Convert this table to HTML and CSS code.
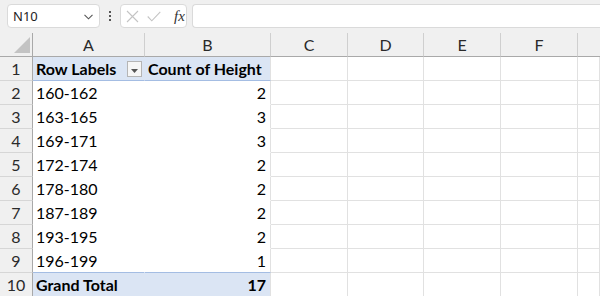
FILE: index.html
```html
<!DOCTYPE html>
<html>
<head>
<meta charset="utf-8">
<link rel="stylesheet" href="styles.css">
</head>
<body>
<div class="formula-bar">
  <div class="namebox">
    <span class="name">N10</span>
    <svg class="chev" width="9" height="6" viewBox="0 0 9 6"><path d="M0.5 0.8 L4.5 4.8 L8.5 0.8" fill="none" stroke="#555" stroke-width="1.1"/></svg>
  </div>
  <div class="dots"><i></i><i></i><i></i></div>
  <div class="fxbox">
    <svg width="13" height="13" viewBox="0 0 13 13"><path d="M1 1 L12 12 M12 1 L1 12" stroke="#c4c4c4" stroke-width="1.1" fill="none"/></svg>
    <svg width="14" height="11" viewBox="0 0 14 11"><path d="M0.7 5.5 L4.8 9.8 L13.3 0.8" stroke="#c4c4c4" stroke-width="1.1" fill="none"/></svg>
    <span class="fx">fx</span>
  </div>
  <div class="input"></div>
</div>
<div class="grid">
  <div class="corner"><svg width="16" height="16" viewBox="0 0 16 16"><path d="M16 0 L16 16 L0 16 Z" fill="#c3c3c3"/></svg></div>
  <div class="colhdr">A</div><div class="colhdr">B</div><div class="colhdr">C</div><div class="colhdr">D</div><div class="colhdr">E</div><div class="colhdr">F</div><div class="colhdr last"></div>

  <div class="rowhdr">1</div><div class="cell pv-head label">Row Labels<span class="filter"><svg width="7" height="4" viewBox="0 0 7 4"><path d="M0 0 L7 0 L3.5 4 Z" fill="#555"/></svg></span></div><div class="cell pv-head">Count of Height</div><div class="cell"></div><div class="cell"></div><div class="cell"></div><div class="cell"></div><div class="cell"></div>

  <div class="rowhdr">2</div><div class="cell pv">160-162</div><div class="cell pv num">2</div><div class="cell"></div><div class="cell"></div><div class="cell"></div><div class="cell"></div><div class="cell"></div>
  <div class="rowhdr">3</div><div class="cell pv">163-165</div><div class="cell pv num">3</div><div class="cell"></div><div class="cell"></div><div class="cell"></div><div class="cell"></div><div class="cell"></div>
  <div class="rowhdr">4</div><div class="cell pv">169-171</div><div class="cell pv num">3</div><div class="cell"></div><div class="cell"></div><div class="cell"></div><div class="cell"></div><div class="cell"></div>
  <div class="rowhdr">5</div><div class="cell pv">172-174</div><div class="cell pv num">2</div><div class="cell"></div><div class="cell"></div><div class="cell"></div><div class="cell"></div><div class="cell"></div>
  <div class="rowhdr">6</div><div class="cell pv">178-180</div><div class="cell pv num">2</div><div class="cell"></div><div class="cell"></div><div class="cell"></div><div class="cell"></div><div class="cell"></div>
  <div class="rowhdr">7</div><div class="cell pv">187-189</div><div class="cell pv num">2</div><div class="cell"></div><div class="cell"></div><div class="cell"></div><div class="cell"></div><div class="cell"></div>
  <div class="rowhdr">8</div><div class="cell pv">193-195</div><div class="cell pv num">2</div><div class="cell"></div><div class="cell"></div><div class="cell"></div><div class="cell"></div><div class="cell"></div>
  <div class="rowhdr">9</div><div class="cell pv last-body">196-199</div><div class="cell pv num last-body">1</div><div class="cell"></div><div class="cell"></div><div class="cell"></div><div class="cell"></div><div class="cell"></div>
  <div class="rowhdr">10</div><div class="cell pv-total label">Grand Total</div><div class="cell pv-total num">17</div><div class="cell"></div><div class="cell"></div><div class="cell"></div><div class="cell"></div><div class="cell"></div>
</div>
</body>
</html>
```
FILE: styles.css
```css
* { box-sizing: border-box; }
html, body { margin: 0; padding: 0; }
body {
  width: 600px;
  height: 296px;
  overflow: hidden;
  background: #ffffff;
  font-family: "Lato", "Liberation Sans", sans-serif;
}
.formula-bar {
  height: 33px;
  background: #f0f0f0;
  display: flex;
  align-items: flex-start;
  padding: 4px 0 0 7px;
}
.namebox {
  width: 93px;
  height: 24px;
  background: #fff;
  border: 1px solid #dadada;
  border-radius: 4px;
  display: flex;
  align-items: center;
  justify-content: space-between;
  padding: 0 6px 0 5px;
}
.name {
  font-family: "Noto Sans", "Open Sans", sans-serif;
  font-size: 13px;
  color: #222;
}
.chev { margin-top: 1px; }
.dots {
  width: 20px;
  height: 24px;
  display: flex;
  flex-direction: column;
  align-items: center;
  justify-content: center;
  gap: 2px;
}
.dots i {
  display: block;
  width: 2px;
  height: 2px;
  background: #555;
}
.fxbox {
  width: 67px;
  height: 24px;
  background: #fff;
  border: 1px solid #dadada;
  border-radius: 4px;
  display: flex;
  align-items: center;
  gap: 8px;
  padding-left: 5px;
}
.fx {
  font-family: "Liberation Serif", serif;
  font-style: italic;
  font-size: 15px;
  color: #333;
  margin-left: 5px;
}
.input {
  flex: 1;
  height: 24px;
  margin-left: 5px;
  background: #fff;
  border: 1px solid #dadada;
  border-right: none;
  border-radius: 4px 0 0 4px;
}
.grid {
  display: grid;
  grid-template-columns: 33px 112px 126px 77px 76px 77px 77px 1fr;
  grid-auto-rows: 24px;
}
.corner {
  background: #f0f0f0;
  border-right: 1px solid #a9a9a9;
  border-bottom: 1px solid #a9a9a9;
  display: flex;
  align-items: flex-end;
  justify-content: flex-end;
  padding: 0 2px 3px 0;
}
.colhdr {
  background: #f0f0f0;
  border-right: 1px solid #cfcfcf;
  border-bottom: 1px solid #a9a9a9;
  font-size: 16px;
  color: #2a2a2a;
  display: flex;
  align-items: center;
  justify-content: center;
}
.colhdr.last { border-right: none; }
.rowhdr {
  background: #f0f0f0;
  border-right: 1px solid #a9a9a9;
  border-bottom: 1px solid #d6d6d6;
  font-size: 16px;
  color: #2a2a2a;
  display: flex;
  align-items: center;
  justify-content: center;
}
.cell {
  border-right: 1px solid #e1e1e1;
  border-bottom: 1px solid #e1e1e1;
  font-size: 16px;
  color: #000;
  display: flex;
  align-items: center;
  padding: 0 4px 0 3px;
  white-space: nowrap;
  position: relative;
}
.cell.num { justify-content: flex-end; }
.cell.pv { border-bottom-color: #ffffff; }
.cell.pv:not(.num) { border-right-color: #ffffff; }
.cell.last-body { border-bottom-color: #a4bde3; }
.pv-head {
  background: #dbe5f4;
  border-bottom: 1px solid #a4bde3;
  font-weight: 700;
}
.pv-total {
  background: #dbe5f4;
  font-weight: 700;
}
.cell.label { border-right-color: #dbe5f4; }
.filter {
  position: absolute;
  left: 94px;
  top: 4px;
  width: 15px;
  height: 16px;
  background: #f6f6f6;
  border: 1px solid #b5b5b5;
  display: flex;
  align-items: center;
  justify-content: center;
  padding-top: 3px;
}
```
